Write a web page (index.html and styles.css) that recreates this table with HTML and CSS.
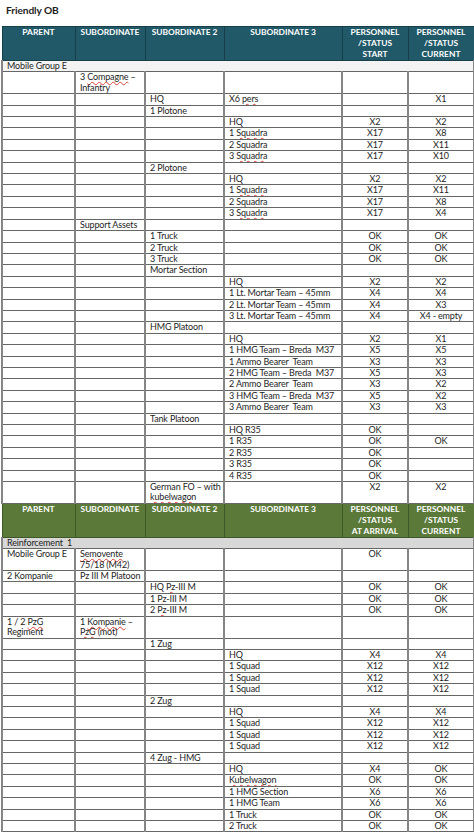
FILE: index.html
```html
<!DOCTYPE html>
<html>
<head>
<meta charset="utf-8">
<link rel="stylesheet" href="styles.css">
</head>
<body>
<div class="title">Friendly OB</div>
<table class="ob">
<colgroup>
<col class="w1"><col class="w2"><col class="w3"><col class="w4"><col class="w5"><col class="w6">
</colgroup>
<tr class="head teal"><th>PARENT</th><th>SUBORDINATE</th><th>SUBORDINATE 2</th><th>SUBORDINATE 3</th><th>PERSONNEL<br>/STATUS<br>START</th><th>PERSONNEL<br>/STATUS<br>CURRENT</th></tr>
<tr class="grp light"><td colspan="6">Mobile Group E</td></tr>
<tr><td></td><td>3 <span class="sp">Compagne</span> –<br>Infantry</td><td></td><td></td><td></td><td></td></tr>
<tr><td></td><td></td><td>HQ</td><td>X6 <span class="sp">pers</span></td><td></td><td>X1</td></tr>
<tr><td></td><td></td><td>1 <span class="sp">Plotone</span></td><td></td><td></td><td></td></tr>
<tr><td></td><td></td><td></td><td>HQ</td><td>X2</td><td>X2</td></tr>
<tr><td></td><td></td><td></td><td>1 <span class="sp">Squadra</span></td><td>X17</td><td>X8</td></tr>
<tr><td></td><td></td><td></td><td>2 <span class="sp">Squadra</span></td><td>X17</td><td>X11</td></tr>
<tr><td></td><td></td><td></td><td>3 <span class="sp">Squadra</span></td><td>X17</td><td>X10</td></tr>
<tr><td></td><td></td><td>2 <span class="sp">Plotone</span></td><td></td><td></td><td></td></tr>
<tr><td></td><td></td><td></td><td>HQ</td><td>X2</td><td>X2</td></tr>
<tr><td></td><td></td><td></td><td>1 <span class="sp">Squadra</span></td><td>X17</td><td>X11</td></tr>
<tr><td></td><td></td><td></td><td>2 <span class="sp">Squadra</span></td><td>X17</td><td>X8</td></tr>
<tr><td></td><td></td><td></td><td>3 <span class="sp">Squadra</span></td><td>X17</td><td>X4</td></tr>
<tr><td></td><td>Support Assets</td><td></td><td></td><td></td><td></td></tr>
<tr><td></td><td></td><td>1 Truck</td><td></td><td>OK</td><td>OK</td></tr>
<tr><td></td><td></td><td>2 Truck</td><td></td><td>OK</td><td>OK</td></tr>
<tr><td></td><td></td><td>3 Truck</td><td></td><td>OK</td><td>OK</td></tr>
<tr><td></td><td></td><td>Mortar Section</td><td></td><td></td><td></td></tr>
<tr><td></td><td></td><td></td><td>HQ</td><td>X2</td><td>X2</td></tr>
<tr><td></td><td></td><td></td><td>1 Lt. Mortar Team – 45mm</td><td>X4</td><td>X4</td></tr>
<tr><td></td><td></td><td></td><td>2 Lt. Mortar Team – 45mm</td><td>X4</td><td>X3</td></tr>
<tr><td></td><td></td><td></td><td>3 Lt. Mortar Team – 45mm</td><td>X4</td><td>X4 - empty</td></tr>
<tr><td></td><td></td><td>HMG Platoon</td><td></td><td></td><td></td></tr>
<tr><td></td><td></td><td></td><td>HQ</td><td>X2</td><td>X1</td></tr>
<tr><td></td><td></td><td></td><td>1 HMG Team – Breda&nbsp; M37</td><td>X5</td><td>X5</td></tr>
<tr><td></td><td></td><td></td><td>1 Ammo Bearer&nbsp; Team</td><td>X3</td><td>X3</td></tr>
<tr><td></td><td></td><td></td><td>2 HMG Team – Breda&nbsp; M37</td><td>X5</td><td>X3</td></tr>
<tr><td></td><td></td><td></td><td>2 Ammo Bearer&nbsp; Team</td><td>X3</td><td>X2</td></tr>
<tr><td></td><td></td><td></td><td>3 HMG Team – Breda&nbsp; M37</td><td>X5</td><td>X2</td></tr>
<tr><td></td><td></td><td></td><td>3 Ammo Bearer&nbsp; Team</td><td>X3</td><td>X3</td></tr>
<tr><td></td><td></td><td>Tank Platoon</td><td></td><td></td><td></td></tr>
<tr><td></td><td></td><td></td><td>HQ R35</td><td>OK</td><td></td></tr>
<tr><td></td><td></td><td></td><td>1 R35</td><td>OK</td><td>OK</td></tr>
<tr><td></td><td></td><td></td><td>2 R35</td><td>OK</td><td></td></tr>
<tr><td></td><td></td><td></td><td>3 R35</td><td>OK</td><td></td></tr>
<tr><td></td><td></td><td></td><td>4 R35</td><td>OK</td><td></td></tr>
<tr><td></td><td></td><td>German FO – with<br><span class="sp">kubelwagon</span></td><td></td><td>X2</td><td>X2</td></tr>
<tr class="head green"><th>PARENT</th><th>SUBORDINATE</th><th>SUBORDINATE 2</th><th>SUBORDINATE 3</th><th>PERSONNEL<br>/STATUS<br>AT ARRIVAL</th><th>PERSONNEL<br>/STATUS<br>CURRENT</th></tr>
<tr class="grp dark"><td colspan="6">Reinforcement&nbsp; 1</td></tr>
<tr><td>Mobile Group E</td><td><span class="sp">Semovente</span><br>75/18 (M42)</td><td></td><td></td><td>OK</td><td></td></tr>
<tr><td>2 <span class="sp">Kompanie</span></td><td><span class="sp">Pz</span> III M Platoon</td><td></td><td></td><td></td><td></td></tr>
<tr><td></td><td></td><td>HQ <span class="sp">Pz</span>-III M</td><td></td><td>OK</td><td>OK</td></tr>
<tr><td></td><td></td><td>1 <span class="sp">Pz</span>-III M</td><td></td><td>OK</td><td>OK</td></tr>
<tr><td></td><td></td><td>2 <span class="sp">Pz</span>-III M</td><td></td><td>OK</td><td>OK</td></tr>
<tr><td>1 / 2 <span class="sp">PzG</span><br>Regiment</td><td>1 <span class="sp">Kompanie</span> –<br><span class="sp">PzG</span> (mot)</td><td></td><td></td><td></td><td></td></tr>
<tr><td></td><td></td><td>1 Zug</td><td></td><td></td><td></td></tr>
<tr><td></td><td></td><td></td><td>HQ</td><td>X4</td><td>X4</td></tr>
<tr><td></td><td></td><td></td><td>1 Squad</td><td>X12</td><td>X12</td></tr>
<tr><td></td><td></td><td></td><td>1 Squad</td><td>X12</td><td>X12</td></tr>
<tr><td></td><td></td><td></td><td>1 Squad</td><td>X12</td><td>X12</td></tr>
<tr><td></td><td></td><td>2 Zug</td><td></td><td></td><td></td></tr>
<tr><td></td><td></td><td></td><td>HQ</td><td>X4</td><td>X4</td></tr>
<tr><td></td><td></td><td></td><td>1 Squad</td><td>X12</td><td>X12</td></tr>
<tr><td></td><td></td><td></td><td>1 Squad</td><td>X12</td><td>X12</td></tr>
<tr><td></td><td></td><td></td><td>1 Squad</td><td>X12</td><td>X12</td></tr>
<tr><td></td><td></td><td>4 Zug - HMG</td><td></td><td></td><td></td></tr>
<tr><td></td><td></td><td></td><td>HQ</td><td>X4</td><td>OK</td></tr>
<tr><td></td><td></td><td></td><td><span class="sp">Kubelwagon</span></td><td>OK</td><td>OK</td></tr>
<tr><td></td><td></td><td></td><td>1 HMG Section</td><td>X6</td><td>X6</td></tr>
<tr><td></td><td></td><td></td><td>1 HMG Team</td><td>X6</td><td>X6</td></tr>
<tr><td></td><td></td><td></td><td>1 Truck</td><td>OK</td><td>OK</td></tr>
<tr><td></td><td></td><td></td><td>2 Truck</td><td>OK</td><td>OK</td></tr>
</table>
</body>
</html>
```

FILE: styles.css
```css
html, body {
  margin: 0;
  padding: 0;
  background: #ffffff;
}
body {
  font-family: "Lato", "Open Sans", "Liberation Sans", sans-serif;
  color: #1e1e1e;
  font-size: 9px;
  letter-spacing: -0.15px;
}
.title {
  font-weight: 700;
  font-size: 10.2px;
  height: 26px;
  line-height: 20px;
  padding-left: 6px;
  box-sizing: border-box;
  letter-spacing: -0.1px;
}
.ob {
  border-collapse: collapse;
  table-layout: fixed;
  width: 472px;
  margin-left: 1px;
}
.w1 { width: 73px; }
.w2 { width: 70px; }
.w3 { width: 79px; }
.w4 { width: 118px; }
.w5 { width: 66px; }
.w6 { width: 66px; }

.ob td, .ob th {
  border-top: 1px solid #666666;
  border-bottom: 1px solid #666666;
  border-left: 2px solid #858585;
  border-right: 2px solid #858585;
  padding: 0 4px;
  line-height: 10.4px;
  vertical-align: top;
  text-align: left;
  white-space: nowrap;
  overflow: hidden;
}
.ob td:nth-child(5), .ob td:nth-child(6) {
  text-align: center;
}
.ob .head th {
  color: #ffffff;
  font-weight: 700;
  text-align: center;
  line-height: 11px;
  padding: 0 2px;
  font-size: 8.4px;
  letter-spacing: 0;
}
.ob .teal th {
  background: #215968;
  border-color: #173f4a;
  border-left-width: 1px;
  border-right-width: 1px;
}
.ob .green th {
  background: #5b7a3a;
  border-color: #3f5628;
  border-left-width: 1px;
  border-right-width: 1px;
}
.ob .grp td {
  text-align: left;
}
.ob .grp.light td {
  background: #f3f3f3;
}
.ob .grp.dark td {
  background: #d8d8d8;
}
.sp {
  text-decoration: underline wavy #d8403a;
  text-decoration-thickness: 1px;
  text-underline-offset: 1px;
}
```
